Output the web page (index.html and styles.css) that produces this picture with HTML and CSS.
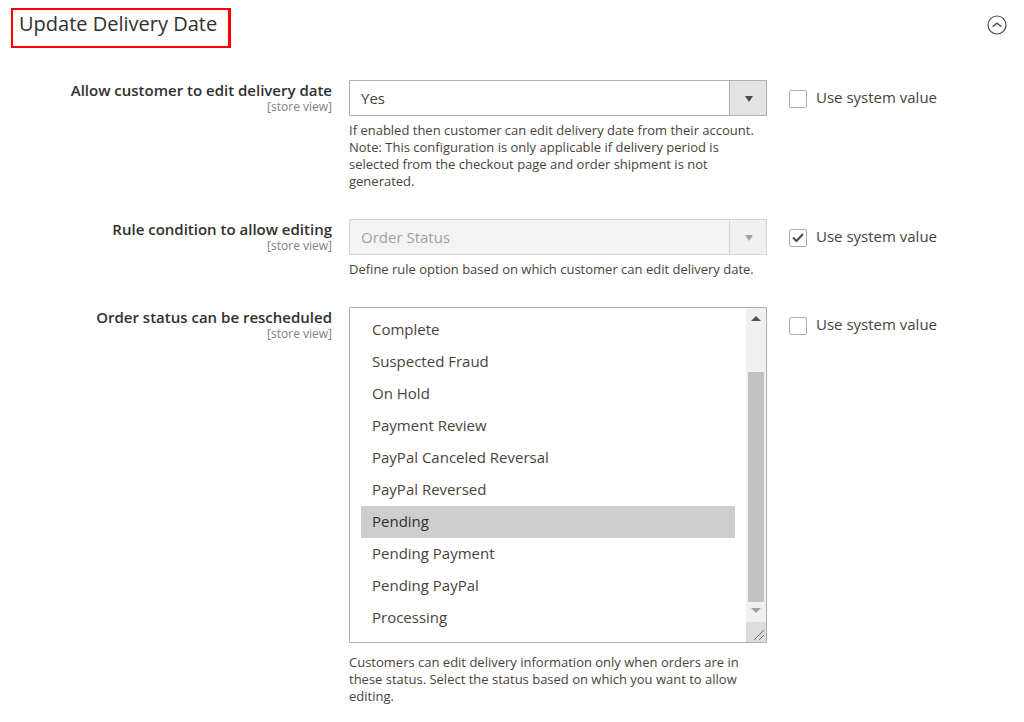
FILE: index.html
```html
<!DOCTYPE html>
<html lang="en">
<head>
    <meta charset="UTF-8">
    <meta name="viewport" content="width=device-width, initial-scale=1.0">
    <title>Update Delivery Date</title>
    <link rel="stylesheet" href="styles.css">
</head>
<body>
    <form class="section">
        <div class="section-head">
            <h2 class="section-title">Update Delivery Date</h2>
            <button type="button" class="collapse" aria-label="Collapse section">
                <svg width="20" height="20" viewBox="0 0 20 20" fill="none" stroke="#514943">
                    <circle cx="10" cy="10" r="9" stroke-width="1.2"/>
                    <path d="M5.500 11.800 10 8.200l4.500 3.600" stroke-width="1.400"/>
                </svg>
            </button>
        </div>

        <div class="field">
            <div class="field-label">
                <label for="allow-edit">Allow customer to edit delivery date</label>
                <span class="scope">[store view]</span>
            </div>
            <div class="field-value">
                <div class="dropdown">
                    <select id="allow-edit">
                        <option>No</option>
                        <option selected>Yes</option>
                    </select>
                </div>
                <p class="note">If enabled then customer can edit delivery date from their account. Note: This configuration is only applicable if delivery period is selected from the checkout page and order shipment is not generated.</p>
            </div>
            <div class="field-default">
                <input type="checkbox" id="allow-edit-default">
                <label for="allow-edit-default">Use system value</label>
            </div>
        </div>

        <div class="field">
            <div class="field-label">
                <label for="rule">Rule condition to allow editing</label>
                <span class="scope">[store view]</span>
            </div>
            <div class="field-value">
                <div class="dropdown disabled">
                    <select id="rule" disabled>
                        <option>Order Status</option>
                    </select>
                </div>
                <p class="note">Define rule option based on which customer can edit delivery date.</p>
            </div>
            <div class="field-default">
                <input type="checkbox" id="rule-default" checked>
                <label for="rule-default">Use system value</label>
            </div>
        </div>

        <div class="field">
            <div class="field-label">
                <label for="statuses">Order status can be rescheduled</label>
                <span class="scope">[store view]</span>
            </div>
            <div class="field-value">
                <div class="multiselect">
                    <select id="statuses" multiple size="10">
                        <option>Canceled</option>
                        <option>Closed</option>
                        <option>Complete</option>
                        <option>Suspected Fraud</option>
                        <option>On Hold</option>
                        <option>Payment Review</option>
                        <option>PayPal Canceled Reversal</option>
                        <option>PayPal Reversed</option>
                        <option selected>Pending</option>
                        <option>Pending Payment</option>
                        <option>Pending PayPal</option>
                        <option>Processing</option>
                    </select>
                    <div class="scrollbar" aria-hidden="true">
                        <svg width="20" height="20" viewBox="0 0 20 20"><path d="M5 13l5-5 5 5z" fill="#505050"/></svg>
                        <div class="track"><div class="thumb"></div></div>
                        <svg width="20" height="20" viewBox="0 0 20 20"><path d="M5 6l5 5 5-5z" fill="#a0a0a0"/></svg>
                        <svg class="resizer" width="20" height="20" viewBox="0 0 20 20"><path d="M8 18 18 8M13 18l5-5" fill="none" stroke="#707070"/></svg>
                    </div>
                </div>
                <p class="note">Customers can edit delivery information only when orders are in these status. Select the status based on which you want to allow editing.</p>
            </div>
            <div class="field-default">
                <input type="checkbox" id="statuses-default">
                <label for="statuses-default">Use system value</label>
            </div>
        </div>
    </form>

    <script>
        const statuses = document.getElementById('statuses');
        window.addEventListener('load', function() {
            statuses.scrollTop = statuses.scrollHeight;
        });
    </script>
</body>
</html>
```
FILE: styles.css
```css
*, *::before {
    box-sizing: border-box;
}
body {
    margin: 0;
    font-family: "Open Sans", "Noto Sans", sans-serif;
    font-size: 15px;
    color: #4a423d;
    background-color: #fff;
}
.section {
    padding-top: 8px;
}
.section-head {
    display: flex;
    justify-content: space-between;
    align-items: flex-start;
    padding: 0 17px 0 11px;
    margin-bottom: 32px;
}
.section-title {
    margin: 0;
    padding: 2px 11px 10px 6px;
    border: 3px solid #f00;
    border-width: 2px 3px 2px 2px;
    font-size: 20px;
    line-height: 24px;
    font-weight: 500;
    color: #303030;
}
.collapse {
    display: flex;
    margin-top: 7px;
    padding: 0;
    border: none;
    background: none;
    cursor: pointer;
}
.field {
    display: grid;
    grid-template-columns: 332fr 418fr 240fr;
    column-gap: 17px;
    margin-bottom: 29px;
}
.field-label {
    text-align: right;
}
.field-label label {
    display: block;
    line-height: 20px;
    font-weight: 600;
    color: #303030;
}
.scope {
    display: block;
    font-size: 12px;
    line-height: 14px;
    color: #808080;
}
.dropdown {
    position: relative;
}
.dropdown select {
    display: block;
    width: 100%;
    height: 36px;
    padding: 0 48px 0 11px;
    border: 1px solid #adadad;
    border-radius: 1px;
    appearance: none;
    background-color: #fff;
    font: inherit;
    color: inherit;
}
.dropdown::before {
    content: "";
    position: absolute;
    top: 0;
    right: 0;
    bottom: 0;
    width: 38px;
    border: 1px solid #adadad;
    background-color: #e3e3e3;
    pointer-events: none;
}
.dropdown::after {
    content: "";
    position: absolute;
    top: 16px;
    right: 14px;
    border: 4px solid transparent;
    border-top: 6px solid #514943;
    border-bottom: none;
    pointer-events: none;
}
.dropdown.disabled {
    opacity: 0.5;
}
.dropdown.disabled select {
    background-color: #e9e9e9;
    opacity: 1;
}
.note {
    margin: 6px 0 0;
    font-size: 13px;
    line-height: 17px;
}
.field-default {
    display: flex;
    align-items: flex-start;
    padding: 7px 0 0 5px;
}
.field-default input {
    appearance: none;
    flex: none;
    width: 18px;
    height: 18px;
    margin: 3px 9px 0 0;
    border: 1px solid #adadad;
    border-radius: 2px;
    background-color: #fff;
}
.field-default input:checked {
    background-image: url('data:image/svg+xml,<svg xmlns="http://www.w3.org/2000/svg" viewBox="0 0 16 16"><path d="M3 7.500 6.500 11 13 4" fill="none" stroke="%23514943" stroke-width="2"/></svg>');
}
.field-default label {
    line-height: 20px;
}
.multiselect {
    display: flex;
    height: 336px;
    border: 1px solid #adadad;
    border-radius: 1px;
}
.multiselect select {
    flex: 1;
    min-width: 0;
    height: 100%;
    padding: 8px 11px;
    border: none;
    background-color: #fff;
    font: inherit;
    color: inherit;
    overflow-y: scroll;
}
.multiselect option {
    min-height: 32px;
    padding: 5px 11px 0;
}
.multiselect option:checked {
    background: #cecece;
    color: #303030;
}
.multiselect + .note {
    margin-top: 11px;
}
.scrollbar {
    display: flex;
    flex-direction: column;
    width: 20px;
    background-color: #f0f0f0;
}
.scrollbar svg {
    flex: none;
}
.scrollbar .resizer {
    background-color: #dcdcdc;
}
.track {
    display: flex;
    flex: 1;
    align-items: flex-end;
    padding: 0 2px;
}
.thumb {
    width: 100%;
    height: 84%;
    background-color: #c1c1c1;
}
```
